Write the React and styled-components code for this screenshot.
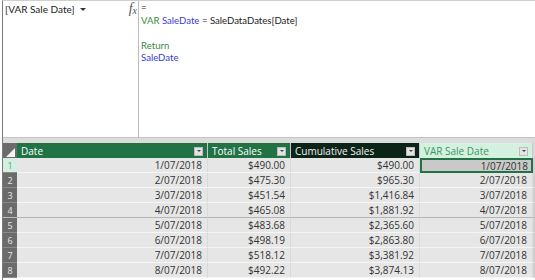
import React from "react";
import styled, { createGlobalStyle, css } from "styled-components";

const GlobalStyle = createGlobalStyle`
  html, body {
    margin: 0;
    padding: 0;
    background: #ffffff;
  }
  body {
    font-family: "Open Sans", "Noto Sans", sans-serif;
    font-size: 10px;
    color: #333;
  }
`;

const Page = styled.div`
  width: 535px;
  height: 280px;
  overflow: hidden;
  padding-left: 2px;
  box-sizing: border-box;
`;

const Frame = styled.div`
  height: 100%;
  border-left: 1px solid #7a7a7a;
  border-top: 1px solid #d0d0d0;
  display: flex;
  flex-direction: column;
  box-sizing: border-box;
`;

const TopArea = styled.div`
  height: 136px;
  display: grid;
  grid-template-columns: 136px 1fr;
  background: #fff;
`;

const LeftPane = styled.div`
  border-right: 1px solid #bdbdbd;
`;

const NameBar = styled.div`
  height: 16px;
  display: flex;
  align-items: center;
  justify-content: space-between;
  padding: 0 1px 0 2px;
`;

const NameBox = styled.div`
  display: flex;
  align-items: center;
  gap: 6px;
  font-family: "Lato", "Open Sans", sans-serif;
  font-size: 10px;
  color: #222;
`;

const Caret = styled.span`
  width: 0;
  height: 0;
  border-left: 3px solid transparent;
  border-right: 3px solid transparent;
  border-top: 3px solid #333;
`;

const Fx = styled.span`
  font-family: "Liberation Serif", serif;
  font-style: italic;
  font-size: 14px;
  color: #555;
  sub {
    font-size: 10px;
    vertical-align: -1px;
  }
`;

const Formula = styled.div`
  padding: 1px 0 0 2px;
  font-family: "Lato", "Open Sans", sans-serif;
  font-size: 9.6px;
  line-height: 12.5px;
  color: #222;
`;

const Line = styled.div`
  height: 12.5px;
  white-space: pre;
`;

const Kw = styled.span`
  color: #3c8c3c;
`;

const Var = styled.span`
  color: #3b3bd0;
`;

const Band = styled.div`
  height: 5px;
  background: #dcdcdc;
  border-top: 1px solid #c4c4c4;
`;

const Grid = styled.div`
  display: grid;
  grid-template-columns: 14px 191px 83px 129px 113px 1fr;
  grid-auto-rows: 15px;
  background: #d6d6d6;
`;

const headerVariants = {
  normal: css`
    background: #217346;
    color: #fff;
  `,
  dark: css`
    background: #0c2417;
    color: #f2f2f2;
  `,
  active: css`
    background: #d2f1df;
    color: #3f9466;
  `,
};

const Corner = styled.div`
  height: 16px;
  background: #6b6b6b;
  display: flex;
  align-items: flex-end;
  justify-content: flex-end;
  padding: 2px;
  box-sizing: border-box;
  &::after {
    content: "";
    width: 0;
    height: 0;
    border-left: 9px solid transparent;
    border-bottom: 9px solid #f4f4f4;
  }
`;

const HeadCell = styled.div`
  height: 16px;
  display: flex;
  align-items: center;
  justify-content: space-between;
  padding: 0 4px 0 4px;
  box-sizing: border-box;
  border-right: 1px solid #c9c9c9;
  font-size: 10px;
  ${(p) => headerVariants[p.$variant || "normal"]}
`;

const FilterBtn = styled.span`
  width: 9px;
  height: 9px;
  background: #e4e4e4;
  border: 1px solid #bcbcbc;
  box-sizing: border-box;
  display: flex;
  align-items: center;
  justify-content: center;
  &::after {
    content: "";
    border-left: 2px solid transparent;
    border-right: 2px solid transparent;
    border-top: 2px solid #444;
  }
`;

const HeadFill = styled.div`
  height: 16px;
  background: #d8d8d8;
`;

const RowNum = styled.div`
  background: ${(p) => (p.$active ? "#d4efdf" : "#6b6b6b")};
  color: ${(p) => (p.$active ? "#5aa57a" : "#e8e8e8")};
  font-size: 9px;
  display: flex;
  align-items: center;
  justify-content: center;
  border-bottom: 1px solid ${(p) => (p.$thick ? "#bdbdbd" : "#8a8a8a")};
  box-sizing: border-box;
`;

const Cell = styled.div`
  background: ${(p) => (p.$selected ? "#c9c9c9" : "#e6e6e6")};
  display: flex;
  align-items: center;
  justify-content: flex-end;
  padding-right: ${(p) => (p.$selected ? "3px" : "5px")};
  box-sizing: border-box;
  border-bottom: 1px solid ${(p) => (p.$thick ? "#b4b4b4" : "#f6f6f6")};
  border-right: 1px solid #dadada;
  color: #333;
  font-size: 10px;
  ${(p) =>
    p.$selected &&
    css`
      border: 2px solid #217346;
    `}
`;

const EndCell = styled.div`
  background: #d0d0d0;
  border-bottom: 1px solid ${(p) => (p.$thick ? "#b4b4b4" : "#e0e0e0")};
`;

const rows = [
  ["1/07/2018", "$490.00", "$490.00", "1/07/2018"],
  ["2/07/2018", "$475.30", "$965.30", "2/07/2018"],
  ["3/07/2018", "$451.54", "$1,416.84", "3/07/2018"],
  ["4/07/2018", "$465.08", "$1,881.92", "4/07/2018"],
  ["5/07/2018", "$483.68", "$2,365.60", "5/07/2018"],
  ["6/07/2018", "$498.19", "$2,863.80", "6/07/2018"],
  ["7/07/2018", "$518.12", "$3,381.92", "7/07/2018"],
  ["8/07/2018", "$492.22", "$3,874.13", "8/07/2018"],
];

const headers = [
  { label: "Date", variant: "normal" },
  { label: "Total Sales", variant: "normal" },
  { label: "Cumulative Sales", variant: "dark" },
  { label: "VAR Sale Date", variant: "active" },
];

export default function App() {
  return (
    <>
      <GlobalStyle />
      <Page>
        <Frame>
          <TopArea>
            <LeftPane>
              <NameBar>
                <NameBox>
                  [VAR Sale Date]
                  <Caret />
                </NameBox>
                <Fx>
                  f<sub>x</sub>
                </Fx>
              </NameBar>
            </LeftPane>
            <Formula>
              <Line>=</Line>
              <Line>
                <Kw>VAR</Kw> <Var>SaleDate</Var> = SaleDataDates[Date]
              </Line>
              <Line> </Line>
              <Line>
                <Kw>Return</Kw>
              </Line>
              <Line>
                <Var>SaleDate</Var>
              </Line>
            </Formula>
          </TopArea>
          <Band />
          <Grid>
            <Corner />
            {headers.map((h) => (
              <HeadCell key={h.label} $variant={h.variant}>
                {h.label}
                <FilterBtn />
              </HeadCell>
            ))}
            <HeadFill />
            {rows.map((r, i) => {
              const thick = i === 3;
              return (
                <React.Fragment key={i}>
                  <RowNum $active={i === 0} $thick={thick}>
                    {i + 1}
                  </RowNum>
                  {r.map((v, j) => (
                    <Cell key={j} $thick={thick} $selected={i === 0 && j === 3}>
                      {v}
                    </Cell>
                  ))}
                  <EndCell $thick={thick} />
                </React.Fragment>
              );
            })}
          </Grid>
        </Frame>
      </Page>
    </>
  );
}
